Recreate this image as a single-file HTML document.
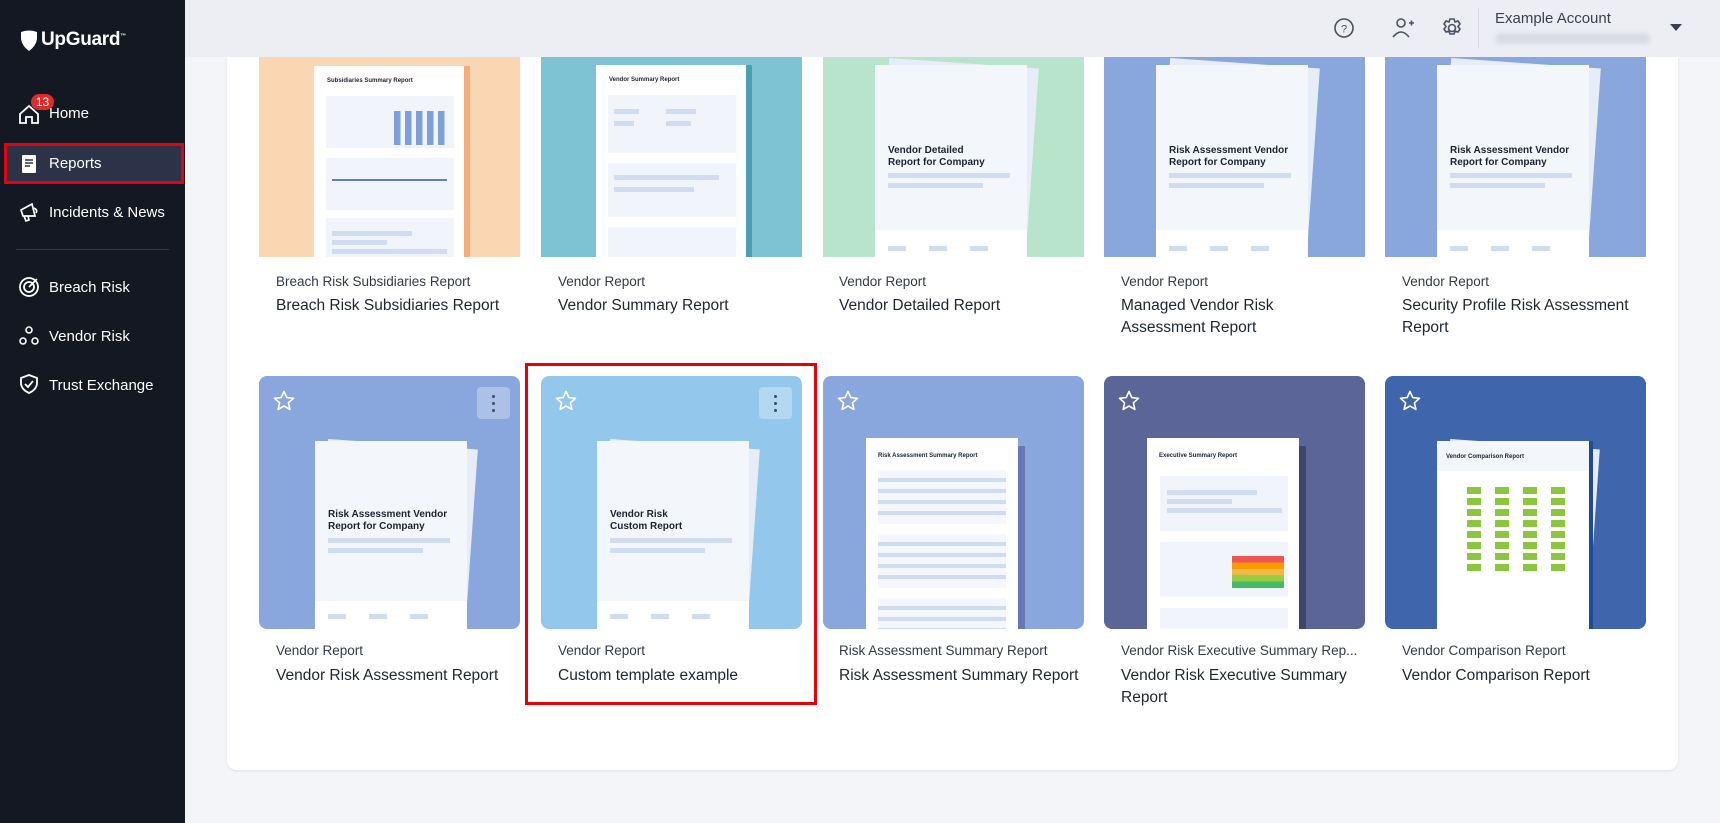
<!DOCTYPE html>
<html><head><meta charset="utf-8"><style>
*{box-sizing:border-box;margin:0;padding:0}
body{width:1720px;height:823px;overflow:hidden;background:#f4f5f8;font-family:"Liberation Sans",sans-serif;position:relative}
.side{position:absolute;left:0;top:0;width:185px;height:823px;background:#141823;color:#fff}
.nav{position:absolute;left:49px;font-size:15px;color:#fff}
.ico{position:absolute;left:18px;width:22px;height:22px}
.top{position:absolute;left:185px;top:0;right:0;height:57px;background:#eceef3;z-index:5}
.main{position:absolute;left:227px;top:57px;width:1451px;height:713px;background:#fff;border-radius:0 0 10px 10px;box-shadow:0 1px 3px rgba(0,0,0,.08)}
.img{position:absolute;width:261px;overflow:hidden;border-radius:8px}
.r1{top:0;height:200px;border-radius:0}
.r2{top:376px;height:253px}
.doc{position:absolute;background:#f3f6fb}
.back{position:absolute;background:#e7edf7;transform:rotate(4deg)}
.bar{position:absolute;height:5px;background:#cfdcf1}
.dt{position:absolute;font-size:10px;font-weight:bold;color:#1c2333;line-height:12px}
.lab{position:absolute;font-size:13.5px;color:#333a48}
.tit{position:absolute;font-size:15.5px;color:#1f2533;font-weight:500;line-height:22px;width:240px}
.star{position:absolute;left:14px;top:14px}
.dots{position:absolute;right:10px;top:11px;width:33px;height:32px;border-radius:4px;background:rgba(255,255,255,.3)}
</style></head><body>
<div class="side">
 <svg style="position:absolute;left:20px;top:30px" width="18" height="22" viewBox="0 0 18 22"><path d="M1 2 Q9 -1 17 2 L17 9 Q16 16 9 21 Q2 16 1 9Z" fill="#fff"/></svg>
 <div style="position:absolute;left:41px;top:29px;font-size:19px;font-weight:bold;letter-spacing:-.3px">UpGuard<sup style="font-size:6px">™</sup></div>
 <svg class="ico" style="top:103px" viewBox="0 0 22 22"><path d="M2 11 L11 3 L20 11 V20 H14 V14 H8 V20 H2Z" fill="none" stroke="#fff" stroke-width="1.8"/></svg>
 <div style="position:absolute;left:31px;top:94px;width:23px;height:16px;border-radius:8px;background:#e02b2b;font-size:12px;text-align:center;line-height:16px">13</div>
 <div class="nav" style="top:105px">Home</div>
 <div style="position:absolute;left:4px;top:143px;width:180px;height:41px;border:3px solid #e8000d;background:#2c3348"></div>
 <svg class="ico" style="top:153px" viewBox="0 0 22 22"><rect x="4" y="2" width="14" height="18" rx="1" fill="#fff"/><path d="M7 7h8M7 10h8M7 13h5" stroke="#2c3348" stroke-width="1.5"/></svg>
 <div class="nav" style="top:155px">Reports</div>
 <svg class="ico" style="top:201px" viewBox="0 0 22 22"><path d="M3 9 L14 3 L17 15 L5 15Z M6 15 L8 20 L11 19 L10 15 M16 7 Q20 9 18 12" fill="none" stroke="#fff" stroke-width="1.7"/></svg>
 <div class="nav" style="top:204px">Incidents &amp; News</div>
 <div style="position:absolute;left:16px;top:249px;width:153px;height:1px;background:#343a48"></div>
 <svg class="ico" style="top:276px" viewBox="0 0 22 22"><circle cx="11" cy="11" r="9" fill="none" stroke="#fff" stroke-width="1.8"/><circle cx="11" cy="11" r="5" fill="none" stroke="#fff" stroke-width="1.8"/><path d="M11 11 L19 3" stroke="#fff" stroke-width="1.8"/></svg>
 <div class="nav" style="top:279px">Breach Risk</div>
 <svg class="ico" style="top:325px" viewBox="0 0 22 22"><g fill="none" stroke="#fff" stroke-width="1.6"><circle cx="11" cy="5" r="3"/><circle cx="5" cy="16" r="3"/><circle cx="17" cy="16" r="3"/></g></svg>
 <div class="nav" style="top:328px">Vendor Risk</div>
 <svg class="ico" style="top:373px" viewBox="0 0 22 22"><path d="M11 2 L19 5 V11 Q18 17 11 20 Q4 17 3 11 V5Z M7 11 L10 14 L15 8" fill="none" stroke="#fff" stroke-width="1.8"/></svg>
 <div class="nav" style="top:377px">Trust Exchange</div>
</div>

<div class="top">
 <svg style="position:absolute;left:1148px;top:17px" width="22" height="22" viewBox="0 0 22 22"><circle cx="11" cy="11" r="9" fill="none" stroke="#4a5064" stroke-width="1.6"/><text x="11" y="15.5" font-size="11" text-anchor="middle" fill="#4a5064" font-family="Liberation Sans">?</text></svg>
 <svg style="position:absolute;left:1206px;top:16px" width="24" height="24" viewBox="0 0 24 24"><g fill="none" stroke="#4a5064" stroke-width="1.6"><circle cx="10" cy="7" r="4"/><path d="M2 21 Q10 11 18 21 M18 7h5 M20.5 4.5v5"/></g></svg>
 <svg style="position:absolute;left:1256px;top:17px" width="22" height="22" viewBox="0 0 22 22"><g fill="none" stroke="#4a5064" stroke-width="1.6"><circle cx="11" cy="11" r="3.5"/><path d="M9 2h4l1 3 3-1 2 3-2 2.5 2 2.5-2 3-3-1-1 3H9l-1-3-3 1-2-3 2-2.5L3 7l2-3 3 1Z"/></g></svg>
 <div style="position:absolute;left:1293px;top:8px;width:1px;height:40px;background:#d5d8e0"></div>
 <div style="position:absolute;left:1310px;top:10px;font-size:15px;color:#3a4050;font-weight:500">Example Account</div>
 <div style="position:absolute;left:1310px;top:33px;width:155px;height:11px;border-radius:6px;background:#d8dbe2;filter:blur(2px)"></div>
 <div style="position:absolute;left:1485px;top:24px;border:6px solid transparent;border-top:7px solid #3a4050"></div>
</div>

<div class="main">
<div class="img r1" style="left:32px;background:#fbd6b2"><div class="doc" style="left:55px;top:9px;width:150px;height:200px;background:#fff;box-shadow:6px 0 0 #f2ad7a"><div class="dt" style="left:13px;top:9px;font-size:6px">Subsidiaries Summary Report</div><div style="position:absolute;left:12px;top:30px;width:128px;height:52px;background:#f1f4fa"></div><div style="position:absolute;left:80px;top:45px;width:55px;height:34px;background:linear-gradient(90deg,#7f9fd8 60%,transparent 60%);background-size:11px 100%"></div><div style="position:absolute;left:12px;top:92px;width:128px;height:52px;background:#f1f4fa"></div><div class="bar" style="left:18px;top:113px;width:115px;height:2px;background:#5b7fc8"></div><div style="position:absolute;left:12px;top:152px;width:128px;height:50px;background:#f1f4fa"></div><div class="bar" style="left:18px;top:165px;width:80px"></div><div class="bar" style="left:18px;top:174px;width:55px"></div><div class="bar" style="left:18px;top:183px;width:115px"></div><div class="bar" style="left:18px;top:192px;width:100px"></div></div></div>
<div class="img r1" style="left:314px;background:#7ec3d4"><div class="doc" style="left:55px;top:8px;width:150px;height:200px;background:#fff;box-shadow:6px 0 0 #4a9fb3"><div class="dt" style="left:13px;top:9px;font-size:6px">Vendor Summary Report</div><div style="position:absolute;left:12px;top:30px;width:128px;height:58px;background:#f1f4fa"></div><div class="bar" style="left:18px;top:44px;width:25px"></div><div class="bar" style="left:70px;top:44px;width:30px"></div><div class="bar" style="left:18px;top:56px;width:20px"></div><div class="bar" style="left:70px;top:56px;width:25px"></div><div style="position:absolute;left:12px;top:98px;width:128px;height:54px;background:#f1f4fa"></div><div class="bar" style="left:18px;top:110px;width:105px"></div><div class="bar" style="left:18px;top:122px;width:80px"></div><div style="position:absolute;left:12px;top:162px;width:128px;height:50px;background:#f1f4fa"></div></div></div>
<div class="img r1" style="left:596px;background:#b8e4cc"><div class="back" style="left:58px;top:6px;width:150px;height:230px"></div><div class="doc" style="left:52px;top:8px;width:152px;height:230px"><div class="dt" style="left:13px;top:80px">Vendor Detailed<br>Report for Company</div><div class="bar" style="left:13px;top:108px;width:122px"></div><div class="bar" style="left:13px;top:118px;width:95px"></div><div style="position:absolute;left:0;top:165px;width:152px;height:60px;background:#fff"></div><div class="bar" style="left:13px;top:181px;width:18px"></div><div class="bar" style="left:54px;top:181px;width:18px"></div><div class="bar" style="left:95px;top:181px;width:18px"></div></div></div>
<div class="img r1" style="left:877px;background:#89a7dc"><div class="back" style="left:58px;top:6px;width:150px;height:230px"></div><div class="doc" style="left:52px;top:8px;width:152px;height:230px"><div class="dt" style="left:13px;top:80px">Risk Assessment Vendor<br>Report for Company</div><div class="bar" style="left:13px;top:108px;width:122px"></div><div class="bar" style="left:13px;top:118px;width:95px"></div><div style="position:absolute;left:0;top:165px;width:152px;height:60px;background:#fff"></div><div class="bar" style="left:13px;top:181px;width:18px"></div><div class="bar" style="left:54px;top:181px;width:18px"></div><div class="bar" style="left:95px;top:181px;width:18px"></div></div></div>
<div class="img r1" style="left:1158px;background:#89a7dc"><div class="back" style="left:58px;top:6px;width:150px;height:230px"></div><div class="doc" style="left:52px;top:8px;width:152px;height:230px"><div class="dt" style="left:13px;top:80px">Risk Assessment Vendor<br>Report for Company</div><div class="bar" style="left:13px;top:108px;width:122px"></div><div class="bar" style="left:13px;top:118px;width:95px"></div><div style="position:absolute;left:0;top:165px;width:152px;height:60px;background:#fff"></div><div class="bar" style="left:13px;top:181px;width:18px"></div><div class="bar" style="left:54px;top:181px;width:18px"></div><div class="bar" style="left:95px;top:181px;width:18px"></div></div></div>

<div class="lab" style="left:49px;top:217px">Breach Risk Subsidiaries Report</div><div class="tit" style="left:49px;top:238px">Breach Risk Subsidiaries Report</div>
<div class="lab" style="left:331px;top:217px">Vendor Report</div><div class="tit" style="left:331px;top:238px">Vendor Summary Report</div>
<div class="lab" style="left:612px;top:217px">Vendor Report</div><div class="tit" style="left:612px;top:238px">Vendor Detailed Report</div>
<div class="lab" style="left:894px;top:217px">Vendor Report</div><div class="tit" style="left:894px;top:238px">Managed Vendor Risk Assessment Report</div>
<div class="lab" style="left:1175px;top:217px">Vendor Report</div><div class="tit" style="left:1175px;top:238px">Security Profile Risk Assessment Report</div>
</div>

<div style="position:absolute;left:0;top:0;width:1720px;height:823px">
<svg width="0" height="0" style="position:absolute"><defs><path id="st" d="M11 1.5 L13.8 7.6 L20.5 8.3 L15.4 12.8 L16.9 19.4 L11 16 L5.1 19.4 L6.6 12.8 L1.5 8.3 L8.2 7.6Z" fill="none" stroke="#fff" stroke-width="1.6" stroke-linejoin="round"/></defs></svg>
<div class="img r2" style="left:259px;background:#89a7dc"><svg class="star" width="22" height="22"><use href="#st"/></svg><div class="dots"><div style="position:absolute;left:15px;top:8px;width:3px;height:3px;border-radius:2px;background:#3f4a66;box-shadow:0 7px 0 #3f4a66,0 14px 0 #3f4a66"></div></div><div class="back" style="left:62px;top:68px;width:150px;height:200px"></div><div class="doc" style="left:56px;top:65px;width:152px;height:200px"><div class="dt" style="left:13px;top:68px">Risk Assessment Vendor<br>Report for Company</div><div class="bar" style="left:13px;top:97px;width:122px"></div><div class="bar" style="left:13px;top:107px;width:95px"></div><div style="position:absolute;left:0;top:160px;width:152px;height:40px;background:#fff"></div><div class="bar" style="left:13px;top:173px;width:18px"></div><div class="bar" style="left:54px;top:173px;width:18px"></div><div class="bar" style="left:95px;top:173px;width:18px"></div></div></div>
<div class="img r2" style="left:541px;background:#93c7eb"><svg class="star" width="22" height="22"><use href="#st"/></svg><div class="dots"><div style="position:absolute;left:15px;top:8px;width:3px;height:3px;border-radius:2px;background:#3f4a66;box-shadow:0 7px 0 #3f4a66,0 14px 0 #3f4a66"></div></div><div class="back" style="left:62px;top:68px;width:150px;height:200px"></div><div class="doc" style="left:56px;top:65px;width:152px;height:200px"><div class="dt" style="left:13px;top:68px">Vendor Risk<br>Custom Report</div><div class="bar" style="left:13px;top:97px;width:122px"></div><div class="bar" style="left:13px;top:107px;width:95px"></div><div style="position:absolute;left:0;top:160px;width:152px;height:40px;background:#fff"></div><div class="bar" style="left:13px;top:173px;width:18px"></div><div class="bar" style="left:54px;top:173px;width:18px"></div><div class="bar" style="left:95px;top:173px;width:18px"></div></div></div>
<div class="img r2" style="left:823px;background:#89a7dc"><svg class="star" width="22" height="22"><use href="#st"/></svg><div class="doc" style="left:43px;top:62px;width:152px;height:200px;background:#fff;box-shadow:7px 8px 0 #6878b6"><div class="dt" style="left:12px;top:12px;font-size:6px">Risk Assessment Summary Report</div><div style="position:absolute;left:12px;top:32px;width:128px;height:54px;background:#f4f7fb;background-image:repeating-linear-gradient(#cfdcf1 0 4px,transparent 4px 11px);background-size:100% 44px;background-position:0 8px;background-repeat:no-repeat"></div><div style="position:absolute;left:12px;top:96px;width:128px;height:54px;background:#f4f7fb;background-image:repeating-linear-gradient(#cfdcf1 0 4px,transparent 4px 11px);background-size:100% 44px;background-position:0 8px;background-repeat:no-repeat"></div><div style="position:absolute;left:12px;top:160px;width:128px;height:50px;background:#f4f7fb;background-image:repeating-linear-gradient(#cfdcf1 0 4px,transparent 4px 11px);background-size:100% 44px;background-position:0 8px;background-repeat:no-repeat"></div></div></div>
<div class="img r2" style="left:1104px;background:#5b6597"><svg class="star" width="22" height="22"><use href="#st"/></svg><div class="doc" style="left:43px;top:62px;width:152px;height:200px;background:#fff;box-shadow:7px 8px 0 #3e4670"><div class="dt" style="left:12px;top:12px;font-size:6px">Executive Summary Report</div><div style="position:absolute;left:13px;top:38px;width:128px;height:55px;background:#f1f4fa"></div><div class="bar" style="left:20px;top:52px;width:90px"></div><div class="bar" style="left:20px;top:61px;width:65px"></div><div class="bar" style="left:20px;top:70px;width:115px"></div><div style="position:absolute;left:13px;top:104px;width:128px;height:55px;background:#f1f4fa"></div><div style="position:absolute;left:85px;top:118px;width:52px;height:32px;background:linear-gradient(#e55 20%,#f90 20% 40%,#eb4 40% 60%,#9c4 60% 80%,#4b6 80%)"></div><div style="position:absolute;left:13px;top:170px;width:128px;height:40px;background:#f1f4fa"></div></div></div>
<div class="img r2" style="left:1385px;background:#3f66ad"><svg class="star" width="22" height="22"><use href="#st"/></svg><div class="back" style="left:58px;top:68px;width:150px;height:200px"></div><div class="doc" style="left:52px;top:65px;width:152px;height:200px;background:#fff;box-shadow:4px 0 0 #1f4a96"><div style="position:absolute;left:0;top:0;width:152px;height:30px;background:#f3f6fb"></div><div class="dt" style="left:9px;top:10px;font-size:6px">Vendor Comparison Report</div><div style="position:absolute;left:30px;top:42px;width:112px;height:90px;background:repeating-linear-gradient(#fff 0 4px,transparent 4px 11px),repeating-linear-gradient(90deg,#8cc63f 0 14px,#fff 14px 28px)"></div></div></div>

<div class="lab" style="left:276px;top:643px">Vendor Report</div><div class="tit" style="left:276px;top:665px">Vendor Risk Assessment Report</div>
<div class="lab" style="left:558px;top:643px">Vendor Report</div><div class="tit" style="left:558px;top:665px">Custom template example</div>
<div class="lab" style="left:839px;top:643px">Risk Assessment Summary Report</div><div class="tit" style="left:839px;top:665px">Risk Assessment Summary Report</div>
<div class="lab" style="left:1121px;top:643px">Vendor Risk Executive Summary Rep...</div><div class="tit" style="left:1121px;top:665px">Vendor Risk Executive Summary Report</div>
<div class="lab" style="left:1402px;top:643px">Vendor Comparison Report</div><div class="tit" style="left:1402px;top:665px">Vendor Comparison Report</div>
<div style="position:absolute;left:525px;top:363px;width:292px;height:342px;border:3px solid #e8000d"></div>
</div>
</body></html>
